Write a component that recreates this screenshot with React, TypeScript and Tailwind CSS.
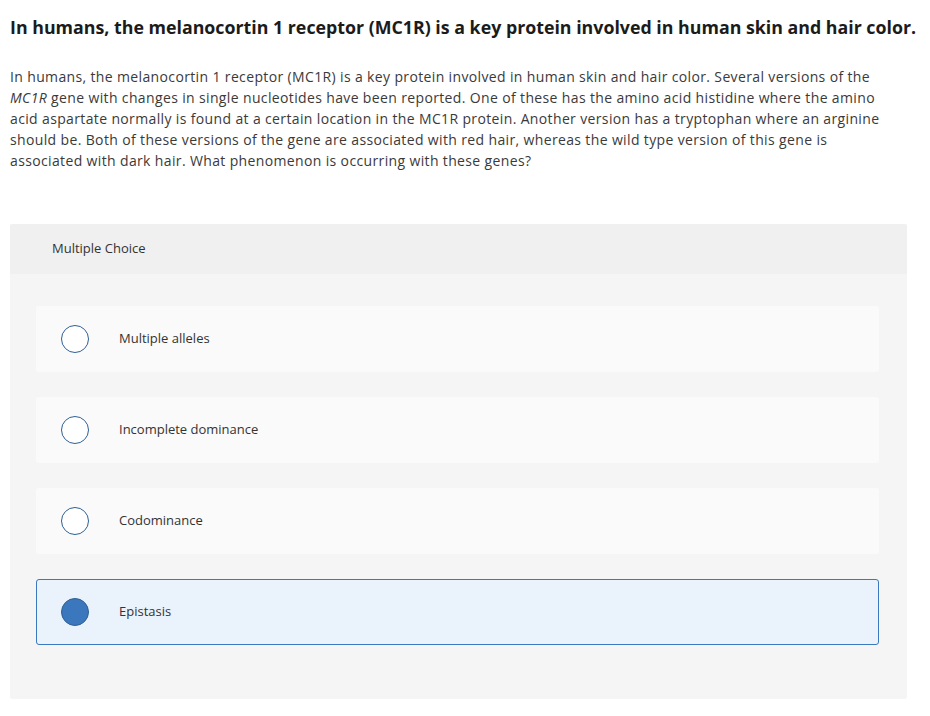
const OPTIONS = [
  { label: 'Multiple alleles', selected: false },
  { label: 'Incomplete dominance', selected: false },
  { label: 'Codominance', selected: false },
  { label: 'Epistasis', selected: true },
];

function Radio({ checked }: { checked: boolean }) {
  return (
    <span
      className={`block size-[28px] shrink-0 rounded-full border-[1.5px] border-[#2f5f94] ${
        checked ? 'bg-[#3a77bd]' : 'bg-white'
      }`}
    />
  );
}

export default function App() {
  return (
    <div className="min-h-[716px] bg-white font-['Open_Sans','Liberation_Sans',sans-serif] text-[#333]">
      <div className="px-[10px] pt-[14px]">
        <h1 className="whitespace-nowrap text-[17.8px] font-bold leading-[26px] text-[#1b1b1b]">
          In humans, the melanocortin 1 receptor (MC1R) is a key protein involved in human skin and hair color.
        </h1>

        <p className="mt-[26px] whitespace-nowrap text-[14px] leading-[21px] tracking-[0.36px] text-[#3a3a3a]">
          In humans, the melanocortin 1 receptor (MC1R) is a key protein involved in human skin and hair color. Several versions of the
          <br />
          <i>MC1R</i> gene with changes in single nucleotides have been reported. One of these has the amino acid histidine where the amino
          <br />
          acid aspartate normally is found at a certain location in the MC1R protein. Another version has a tryptophan where an arginine
          <br />
          should be. Both of these versions of the gene are associated with red hair, whereas the wild type version of this gene is
          <br />
          associated with dark hair. What phenomenon is occurring with these genes?
        </p>

        <section className="mt-[53px] w-[897px] overflow-hidden rounded-[2px] bg-[#f5f5f5]">
          <div className="flex h-[50px] items-center bg-[#f0f0f0] pl-[42px] text-[13px] text-[#333]">
            Multiple Choice
          </div>

          <div className="flex flex-col gap-[25px] px-[26px] pt-[32px] pb-[54px]">
            {OPTIONS.map((opt) => (
              <label
                key={opt.label}
                className={`flex h-[66px] w-[843px] items-center rounded-[3px] border pl-[24px] ${
                  opt.selected
                    ? 'border-[#3b78c0] bg-[#eaf2fc]'
                    : 'border-transparent bg-[#fafafa]'
                }`}
              >
                <Radio checked={opt.selected} />
                <span className="ml-[30px] text-[13px] text-[#333]">{opt.label}</span>
              </label>
            ))}
          </div>
        </section>
      </div>
    </div>
  );
}
